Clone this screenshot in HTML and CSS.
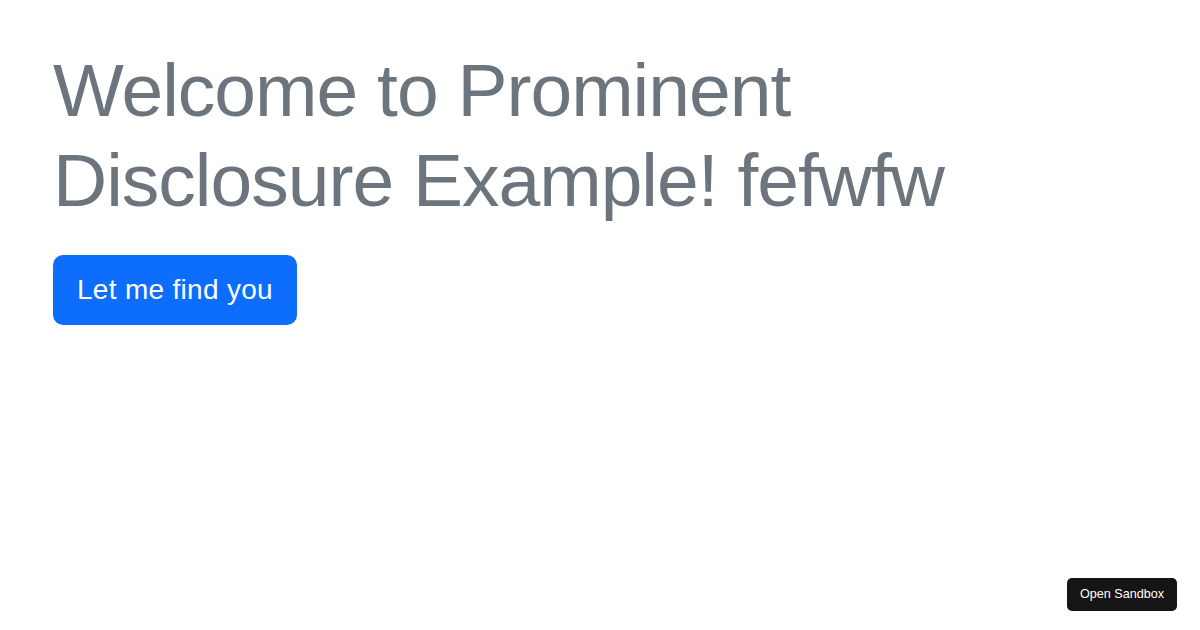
FILE: index.html
```html
<!DOCTYPE html>
<html>
<head>
<meta charset="utf-8">
<link rel="stylesheet" href="styles.css">
</head>
<body>
<main class="page">
  <h1 class="title">Welcome to Prominent Disclosure Example! fefwfw</h1>
  <button class="btn-primary">Let me find you</button>
</main>
<a class="sandbox">Open Sandbox</a>
</body>
</html>
```
FILE: styles.css
```css
html, body {
  margin: 0;
  padding: 0;
  background: #fff;
  font-family: "Liberation Sans", Arial, sans-serif;
}
.page {
  padding: 45px 53px;
  display: flex;
  flex-direction: column;
  align-items: flex-start;
}
.title {
  margin: 0 0 30px 0;
  font-size: 75px;
  line-height: 90px;
  font-weight: 300;
  letter-spacing: -1px;
  color: #6c757d;
  max-width: 1000px;
}
.btn-primary {
  font-family: "Liberation Sans", Arial, sans-serif;
  font-size: 28px;
  line-height: 40px;
  letter-spacing: 0.3px;
  padding: 15px 24px;
  color: #fff;
  background: #0d6efd;
  border: 0;
  border-radius: 10px;
}
.sandbox {
  position: fixed;
  right: 23px;
  bottom: 19px;
  background: #151515;
  color: #fff;
  font-size: 12.6px;
  line-height: 33px;
  padding: 0 13px;
  border-radius: 5px;
  font-family: "Liberation Sans", Arial, sans-serif;
}
```
